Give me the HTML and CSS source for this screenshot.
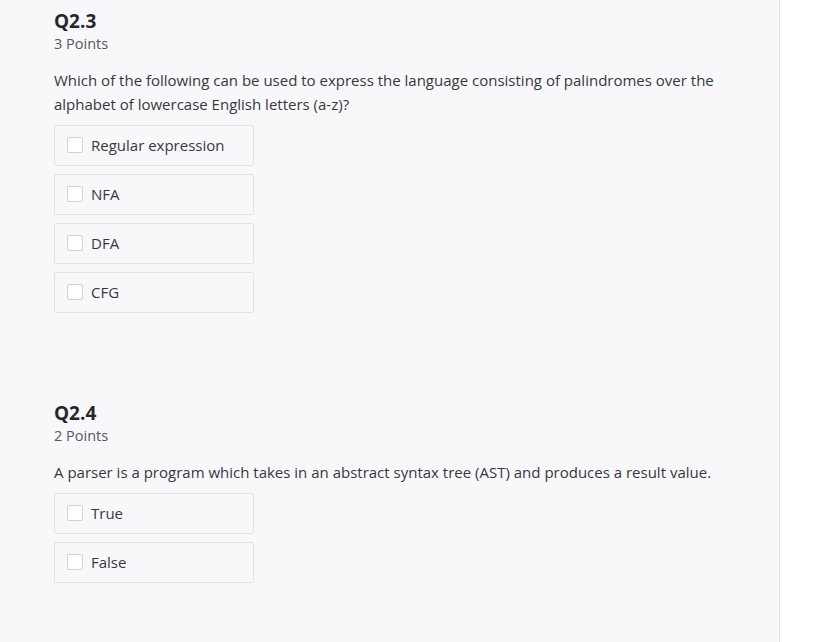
FILE: index.html
```html
<!DOCTYPE html>
<html>
<head>
<meta charset="utf-8">
<link rel="stylesheet" href="styles.css">
</head>
<body>
<div class="layout">
  <main class="main">
    <section class="question q1">
      <h2 class="q-title">Q2.3</h2>
      <div class="q-points">3 Points</div>
      <p class="q-text">Which of the following can be used to express the language consisting of palindromes over the alphabet of lowercase English letters (a-z)?</p>
      <div class="options">
        <label class="option"><span class="box"></span><span>Regular expression</span></label>
        <label class="option"><span class="box"></span><span>NFA</span></label>
        <label class="option"><span class="box"></span><span>DFA</span></label>
        <label class="option"><span class="box"></span><span>CFG</span></label>
      </div>
    </section>
    <section class="question q2">
      <h2 class="q-title">Q2.4</h2>
      <div class="q-points">2 Points</div>
      <p class="q-text">A parser is a program which takes in an abstract syntax tree (AST) and produces a result value.</p>
      <div class="options">
        <label class="option"><span class="box"></span><span>True</span></label>
        <label class="option"><span class="box"></span><span>False</span></label>
      </div>
    </section>
  </main>
  <aside class="side"></aside>
</div>
</body>
</html>
```
FILE: styles.css
```css
html, body {
  margin: 0;
  padding: 0;
  height: 100%;
}
body {
  font-family: "Open Sans", "Lato", sans-serif;
  color: #333;
  background: #fff;
}
.layout {
  display: flex;
  height: 642px;
  overflow: hidden;
}
.main {
  width: 780px;
  flex: none;
  background: #f8f8fb;
  border-right: 1px solid #e3e3e8;
  box-sizing: border-box;
  padding: 10px 0 0 54px;
}
.side {
  flex: 1;
  background: #fff;
}
.question.q2 {
  margin-top: 89px;
}
.q-title {
  margin: 0;
  font-size: 19px;
  font-weight: 700;
  line-height: 22px;
  color: #24272b;
}
.q-points {
  font-size: 14.5px;
  line-height: 22px;
  color: #555a60;
  margin-top: 1px;
}
.q-text {
  margin: 13px 0 0 0;
  font-size: 15px;
  line-height: 24px;
  width: 690px;
  color: #35393e;
}
.options {
  display: flex;
  flex-direction: column;
  gap: 8px;
  margin-top: 9px;
}
.option {
  display: flex;
  align-items: center;
  gap: 8px;
  width: 200px;
  height: 41px;
  box-sizing: border-box;
  border: 1px solid #e2e3e9;
  border-radius: 2px;
  padding: 0 0 2px 12px;
  font-size: 15px;
  color: #35393e;
}
.box {
  width: 16px;
  height: 16px;
  box-sizing: border-box;
  border: 1px solid #cfd1d7;
  border-radius: 2px;
  background: #fff;
  flex: none;
}
```
